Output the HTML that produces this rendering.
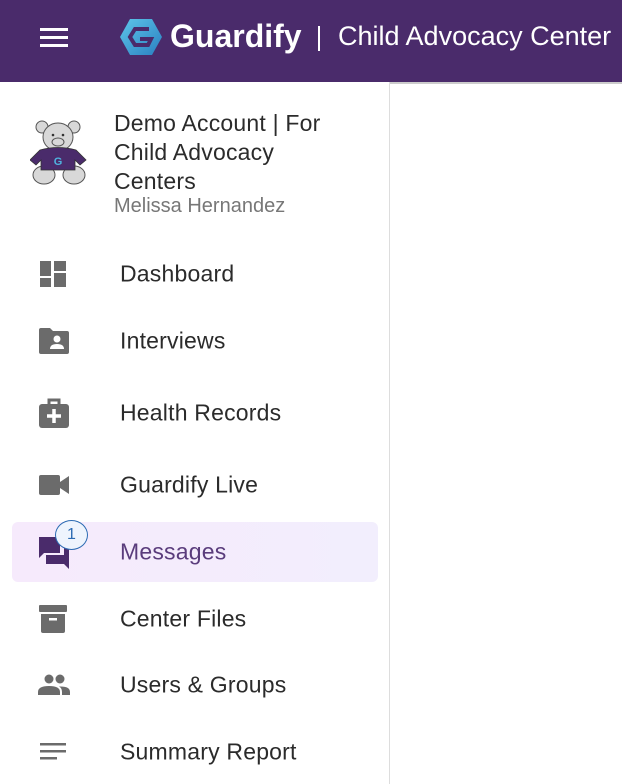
<!DOCTYPE html>
<html><head><meta charset="utf-8"><style>
*{margin:0;padding:0;box-sizing:border-box}
body{width:622px;height:784px;overflow:hidden;background:#fff;font-family:"Liberation Sans",sans-serif;position:relative}
.hdr{position:absolute;left:0;top:0;width:622px;height:82px;background:#4a2b6b;color:#fff}
.side{position:absolute;left:0;top:82px;width:390px;height:702px;border-right:1px solid #ddd}
.topline{position:absolute;left:390px;top:82px;width:232px;height:2px;background:#ccc}
.item{position:absolute;left:0;width:389px;height:60px}
.item svg{position:absolute;left:38px;top:50%;transform:translateY(-50%)}
.item span{position:absolute;left:120px;top:50%;transform:translateY(-50%);font-size:23px;color:#2b2b2b;letter-spacing:0.2px}
</style></head><body>
<div class="hdr">
 <div style="position:absolute;left:40px;top:28px;width:28px;height:3px;background:#fff;box-shadow:0 8px 0 #fff,0 16px 0 #fff"></div>
 <svg style="position:absolute;left:119px;top:17px" width="44" height="40" viewBox="0 0 44 40">
  <defs><linearGradient id="g" x1="0" y1="0" x2="1" y2="1"><stop offset="0" stop-color="#5ec6ea"/><stop offset="1" stop-color="#2a7fc0"/></linearGradient></defs>
  <path d="M11 2H33L43 20L33 38H11L1 20Z" fill="url(#g)"/>
  <path d="M30 12H16L11 20L16 28H29L32 22H21" fill="none" stroke="#4a2b6b" stroke-width="4"/>
 </svg>
 <div style="position:absolute;left:170px;top:18px;font-size:32px;font-weight:bold;letter-spacing:0px">Guardify</div>
 <div style="position:absolute;left:318px;top:26px;width:2px;height:25px;background:#fff"></div>
 <div style="position:absolute;left:338px;top:21px;font-size:27px">Child Advocacy Center</div>
</div>
<div class="topline"></div>
<div class="side">
 <svg style="position:absolute;left:30px;top:38px" width="58" height="66" viewBox="0 0 58 66">
  <g fill="#d8d8d8" stroke="#555" stroke-width="1">
   <ellipse cx="14" cy="55" rx="11" ry="9"/><ellipse cx="44" cy="55" rx="11" ry="9"/>
   <circle cx="12" cy="7" r="6"/><circle cx="44" cy="7" r="6"/>
   <ellipse cx="28" cy="17" rx="15" ry="14"/>
   <ellipse cx="28" cy="22" rx="6" ry="4"/>
  </g>
  <circle cx="23" cy="15" r="1.3" fill="#333"/><circle cx="33" cy="15" r="1.3" fill="#333"/>
  <path d="M10 30Q28 25 46 30L56 40L50 45L45 40V50H11V40L6 45L0 40Z" fill="#4a2b6b" stroke="#333" stroke-width="0.8"/>
  <text x="28" y="45" font-size="11" font-weight="bold" fill="#4fb4e0" text-anchor="middle" font-family="Liberation Sans">G</text>
 </svg>
 <div style="position:absolute;left:114px;top:27px;font-size:23px;line-height:29px;color:#2b2b2b;letter-spacing:0.2px">Demo Account | For<br>Child Advocacy<br>Centers</div>
 <div style="position:absolute;left:114px;top:113px;font-size:20px;color:#777">Melissa Hernandez</div>

 <div class="item" style="top:162px"><svg width="30" height="30" viewBox="0 0 30 30" fill="#6b6b6b"><rect x="2" y="2" width="11" height="15"/><rect x="16" y="2" width="12" height="10"/><rect x="16" y="14" width="12" height="14"/><rect x="2" y="19" width="11" height="9"/></svg><span>Dashboard</span></div>
 <div class="item" style="top:229px"><svg width="32" height="28" viewBox="0 0 32 28"><path d="M1 3Q1 1 3 1H12L15 4H29Q31 4 31 6V25Q31 27 29 27H3Q1 27 1 25Z" fill="#6b6b6b"/><circle cx="19" cy="12" r="3.5" fill="#fff"/><path d="M12 22Q12 17 19 17Q26 17 26 22Z" fill="#fff"/></svg><span>Interviews</span></div>
 <div class="item" style="top:301px"><svg width="32" height="32" viewBox="0 0 32 32"><path d="M11 7V3H21V7" fill="none" stroke="#6b6b6b" stroke-width="3"/><rect x="1" y="7" width="30" height="24" rx="3" fill="#6b6b6b"/><path d="M16 12V26M9 19H23" stroke="#fff" stroke-width="3.5"/></svg><span>Health Records</span></div>
 <div class="item" style="top:373px"><svg width="32" height="22" viewBox="0 0 32 22" fill="#6b6b6b"><rect x="1" y="1" width="21" height="20" rx="2"/><path d="M22 8L31 2V20L22 14Z"/></svg><span>Guardify Live</span></div>
 <div style="position:absolute;left:12px;top:440px;width:366px;height:60px;border-radius:6px;background:linear-gradient(90deg,#f6eafc,#f2eefd)"></div>
 <div class="item" style="top:440px"><svg width="34" height="34" viewBox="0 0 34 34" style="left:38px"><path d="M1 2H22V18H6L1 23Z" fill="#4a2b6b"/><path d="M8 20H26V8H31V34L26 29H8Z" fill="#4a2b6b"/></svg><span style="color:#5a3c7c">Messages</span></div>
 <div style="position:absolute;left:55px;top:438px;width:33px;height:30px;border-radius:50%;background:#eef4fd;border:1px solid #2c6bb3;color:#2c6bb3;font-size:16px;text-align:center;line-height:28px">1</div>
 <div class="item" style="top:507px"><svg width="30" height="30" viewBox="0 0 30 30" fill="#6b6b6b"><rect x="1" y="1" width="28" height="7" rx="1"/><path d="M3 10H27V27Q27 29 25 29H5Q3 29 3 27Z"/><rect x="11" y="14" width="8" height="2.5" fill="#fff"/></svg><span>Center Files</span></div>
 <div class="item" style="top:573px"><svg width="32" height="22" viewBox="0 0 32 22" fill="#6b6b6b"><circle cx="11" cy="5" r="4.5"/><circle cx="22" cy="5" r="4.5"/><path d="M0 21V18Q0 12 11 12Q22 12 22 18V21Z"/><path d="M24 21V18Q24 14 21 12.5Q32 12 32 18V21Z"/></svg><span>Users &amp; Groups</span></div>
 <div class="item" style="top:640px"><svg width="30" height="22" viewBox="0 0 30 22" fill="#6b6b6b"><rect x="2" y="2" width="26" height="2.5"/><rect x="2" y="9" width="26" height="2.5"/><rect x="2" y="16" width="17" height="2.5"/></svg><span>Summary Report</span></div>
</div>
</body></html>
